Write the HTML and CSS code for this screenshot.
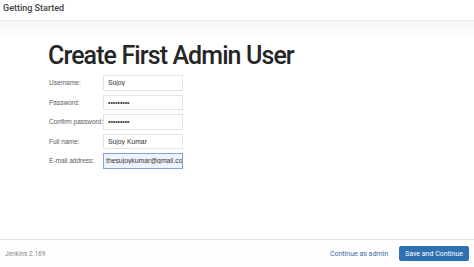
FILE: index.html
```html
<!DOCTYPE html>
<html>

<head>
    <title>Setup Wizard - Jenkins</title>
    <link rel="stylesheet" href="styles.css">
</head>

<body>
    <div class="wizard">
        <div class="wizard-header">Getting Started</div>

        <div class="wizard-body">
            <h1>Create First Admin User</h1>

            <form class="admin-form">
                <label>Username:</label>
                <input type="text" value="Sujoy">
                <label>Password:</label>
                <input type="password" value="sujoy1234">
                <label>Confirm password:</label>
                <input type="password" value="sujoy1234">
                <label>Full name:</label>
                <input type="text" value="Sujoy Kumar">
                <label>E-mail address:</label>
                <input type="text" class="focused" value="thesujoykumar@gmail.com">
            </form>
        </div>

        <div class="wizard-footer">
            <span class="version">Jenkins 2.169</span>
            <div class="actions">
                <a class="link-btn">Continue as admin</a>
                <button class="save-btn">Save and Continue</button>
            </div>
        </div>
    </div>
</body>

</html>
```

FILE: styles.css
```css
body {
    margin: 0;
    font-family: 'Roboto', 'Liberation Sans', sans-serif;
    background: #fff;
    color: #333;
}

.wizard {
    display: flex;
    flex-direction: column;
    height: 267px;
}

.wizard-header {
    height: 20px;
    padding-left: 3px;
    font-size: 9px;
    font-weight: 500;
    line-height: 17px;
    color: #444;
    border-bottom: 1px solid #eee;
}

.wizard-body {
    flex: 1;
    padding: 20px 0 0 48px;
    background: linear-gradient(#f6f6f6, #fff 18px);
}

h1 {
    margin: 0 0 4px;
    font-size: 25px;
    font-weight: 500;
    letter-spacing: -0.9px;
    line-height: 30px;
    color: #262626;
}

.admin-form {
    display: grid;
    grid-template-columns: 55px 80px;
    row-gap: 4px;
    align-items: center;
    font-family: 'Liberation Sans', Arial, sans-serif;
    font-size: 6.5px;
}

.admin-form label {
    color: #5a5a5a;
    padding-left: 1px;
    white-space: nowrap;
}

.admin-form input {
    box-sizing: border-box;
    height: 15.5px;
    padding: 0 4px;
    border: 1px solid #e3e3e3;
    font-family: 'Liberation Sans', Arial, sans-serif;
    font-size: 6.8px;
    color: #333;
    background: #fff;
}

.admin-form input.focused {
    padding: 0 0 0 2px;
    border-color: #7ea5d6;
    background: #eef3fb;
}

.wizard-footer {
    height: 27px;
    border-top: 1px solid #e5e5e5;
    display: flex;
    align-items: center;
    justify-content: space-between;
    padding: 0 5px;
    background: #fdfdfd;
}

.version {
    font-size: 6.5px;
    color: #888;
}

.actions {
    display: flex;
    align-items: center;
    gap: 11px;
}

.link-btn {
    font-size: 7px;
    color: #3a6da8;
}

.save-btn {
    height: 15px;
    padding: 0 6px;
    border: none;
    border-radius: 2px;
    background: #2f6fb3;
    color: #fff;
    font-family: 'Roboto', sans-serif;
    font-size: 7px;
}
```
